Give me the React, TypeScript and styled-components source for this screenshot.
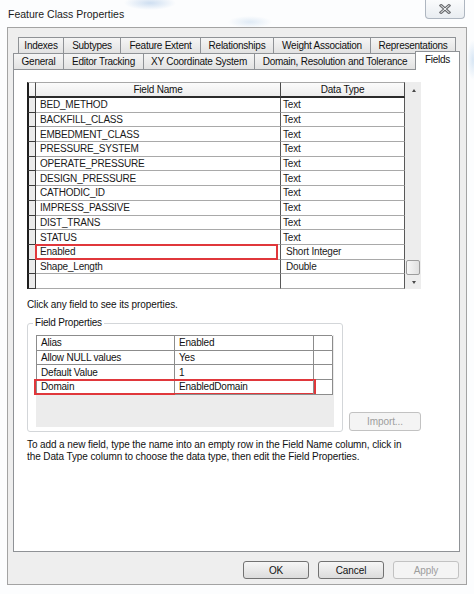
import React from "react";
import styled, { createGlobalStyle } from "styled-components";

type Field = {
  name: string;
  type: string;
  edited?: boolean;
  marked?: boolean;
};

const FIELDS: Field[] = [
  { name: "BED_METHOD", type: "Text" },
  { name: "BACKFILL_CLASS", type: "Text" },
  { name: "EMBEDMENT_CLASS", type: "Text" },
  { name: "PRESSURE_SYSTEM", type: "Text" },
  { name: "OPERATE_PRESSURE", type: "Text" },
  { name: "DESIGN_PRESSURE", type: "Text" },
  { name: "CATHODIC_ID", type: "Text" },
  { name: "IMPRESS_PASSIVE", type: "Text" },
  { name: "DIST_TRANS", type: "Text" },
  { name: "STATUS", type: "Text" },
  { name: "Enabled", type: "Short Integer", edited: true, marked: true },
  { name: "Shape_Length", type: "Double", edited: true },
  { name: "", type: "" },
];

const PROPERTIES = [
  { label: "Alias", value: "Enabled" },
  { label: "Allow NULL values", value: "Yes" },
  { label: "Default Value", value: "1" },
  { label: "Domain", value: "EnabledDomain", marked: true },
];

const BACK_TABS = [
  { label: "Indexes", width: 46 },
  { label: "Subtypes", width: 58 },
  { label: "Feature Extent", width: 81 },
  { label: "Relationships", width: 74 },
  { label: "Weight Association", width: 98 },
  { label: "Representations", width: 86 },
];

const FRONT_TABS = [
  { label: "General", width: 51 },
  { label: "Editor Tracking", width: 81 },
  { label: "XY Coordinate System", width: 112 },
  { label: "Domain, Resolution and Tolerance", width: 162 },
  { label: "Fields", width: 45, active: true },
];

const GlobalStyle = createGlobalStyle`
  html, body {
    margin: 0;
    padding: 0;
  }
  body {
    width: 474px;
    height: 594px;
    overflow: hidden;
    background:
      radial-gradient(ellipse 26px 7px at 150px 3px, rgba(150, 185, 225, 0.45), transparent),
      radial-gradient(ellipse 22px 6px at 250px 22px, rgba(170, 200, 230, 0.35), transparent),
      radial-gradient(ellipse 6px 20px at 473px 60px, rgba(160, 195, 230, 0.4), transparent),
      #fcfdfe;
    font-family: "Liberation Sans", Arial, sans-serif;
    font-size: 10px;
    color: #111;
  }
`;

const Screen = styled.div`
  width: 474px;
  height: 594px;
`;

const TitleBar = styled.div`
  height: 27px;
  display: flex;
  justify-content: space-between;
  align-items: flex-start;
  padding: 0 9px 0 8px;
  box-sizing: border-box;
`;

const Title = styled.div`
  margin-top: 8px;
  font-size: 10.5px;
  color: #1b1b1b;
`;

const CloseButton = styled.div`
  width: 40px;
  height: 20px;
  margin-top: -1px;
  box-sizing: border-box;
  border: 1px solid #aeb6c0;
  border-top: none;
  border-radius: 0 0 4px 4px;
  background: linear-gradient(#fbfcfd, #e9edf1);
  display: flex;
  align-items: center;
  justify-content: center;
`;

const Client = styled.div`
  margin: 0 7px;
  height: 558px;
  box-sizing: border-box;
  border: 1px solid #a3a3a3;
  background: #eeeeee;
  padding: 9px 6px 0 5px;
`;

const TabControl = styled.div`
  display: flex;
  flex-direction: column;
`;

const TabRow = styled.div<{ $indent: number }>`
  display: flex;
  align-items: flex-end;
  height: 16px;
  padding-left: ${(p) => p.$indent}px;
`;

const Tab = styled.div<{ $w: number; $active?: boolean }>`
  width: ${(p) => p.$w}px;
  height: ${(p) => (p.$active ? 19 : 16)}px;
  margin-right: -1px;
  margin-bottom: ${(p) => (p.$active ? -1 : 0)}px;
  box-sizing: border-box;
  border: 1px solid #8f9296;
  border-bottom: none;
  background: ${(p) =>
    p.$active ? "#ffffff" : "linear-gradient(#f5f5f5, #e2e2e2)"};
  position: relative;
  z-index: ${(p) => (p.$active ? 2 : 1)};
  display: flex;
  align-items: ${(p) => (p.$active ? "flex-start" : "center")};
  padding-top: ${(p) => (p.$active ? 2 : 0)}px;
  justify-content: center;
  white-space: nowrap;
  letter-spacing: -0.25px;
  color: #111;
`;

const Panel = styled.div`
  height: 483px;
  box-sizing: border-box;
  border: 1px solid #8f9296;
  background: #ffffff;
  padding: 12px 0 0 13px;
`;

const FieldGrid = styled.div`
  display: flex;
  width: 394px;
  height: 207px;
`;

const GridTable = styled.div`
  display: grid;
  grid-template-columns: 9px 245px 124px;
  grid-template-rows: 16px repeat(13, 14.7px);
`;

const HeaderCell = styled.div<{ $selector?: boolean }>`
  box-sizing: border-box;
  border-top: 1px solid #a8a8a8;
  border-right: 1px solid #4a4a4a;
  border-bottom: 2px solid #2b2b2b;
  border-left: ${(p) => (p.$selector ? "2px solid #1d1d1d" : "none")};
  background: linear-gradient(#fbfbfb, #ededed);
  display: flex;
  align-items: center;
  justify-content: center;
  letter-spacing: -0.2px;
`;

const SelectorCell = styled.div`
  box-sizing: border-box;
  border-left: 2px solid #1d1d1d;
  border-right: 1px solid #3d3d3d;
  border-bottom: 1px solid #3d3d3d;
  background: #ebebeb;
`;

const Cell = styled.div<{ $pad: number }>`
  position: relative;
  box-sizing: border-box;
  border-right: 1px solid #585858;
  border-bottom: 1px solid #a9a9a9;
  padding-left: ${(p) => p.$pad}px;
  display: flex;
  align-items: center;
  white-space: nowrap;
  letter-spacing: -0.2px;
  color: #1a1a1a;
`;

const Marker = styled.div<{ $spanWidth?: number }>`
  position: absolute;
  top: -1px;
  bottom: -1px;
  left: ${(p) => (p.$spanWidth ? -3 : -1)}px;
  ${(p) => (p.$spanWidth ? `width: ${p.$spanWidth}px;` : "right: 2px;")}
  border: 2px solid #e0373b;
  box-sizing: border-box;
  pointer-events: none;
`;

const ScrollBar = styled.div`
  width: 16px;
  display: flex;
  flex-direction: column;
  background: #ededed;
  padding-left: 1px;
  box-sizing: border-box;
`;

const ScrollArrow = styled.div<{ $down?: boolean; $h: number }>`
  height: ${(p) => p.$h}px;
  display: flex;
  align-items: center;
  justify-content: center;

  &::after {
    content: "";
    width: 0;
    height: 0;
    border-left: 2.5px solid transparent;
    border-right: 2.5px solid transparent;
    ${(p) =>
      p.$down
        ? "border-top: 3px solid #4a4a4a;"
        : "border-bottom: 3px solid #4a4a4a;"}
  }
`;

const ScrollTrack = styled.div`
  flex: 1;
  display: flex;
  align-items: flex-end;
`;

const ScrollThumb = styled.div`
  width: 14px;
  height: 15px;
  box-sizing: border-box;
  border: 1px solid #9c9c9c;
  border-radius: 2px;
  background: linear-gradient(90deg, #f7f7f7, #e0e0e0);
`;

const Hint = styled.div`
  margin-top: 10px;
  line-height: 12px;
  letter-spacing: -0.1px;
`;

const PropertiesRow = styled.div`
  display: flex;
  align-items: flex-end;
  gap: 6px;
  margin-top: 6px;
`;

const GroupBox = styled.fieldset`
  margin: 0;
  width: 316px;
  box-sizing: border-box;
  border: 1px solid #d3d6d9;
  border-radius: 3px;
  padding: 0 8px 4px 8px;
  min-width: 0;
`;

const GroupLabel = styled.legend`
  margin-left: -3px;
  padding: 0 2px;
  line-height: 12px;
  letter-spacing: -0.2px;
`;

const PropertiesArea = styled.div`
  margin-top: 6px;
  width: 298px;
  height: 92px;
  background: #ececec;
`;

const PropertiesTable = styled.div`
  display: grid;
  grid-template-columns: 138px 139px 19px;
  grid-template-rows: repeat(4, 14.7px);
  border-top: 1px solid #8c8c8c;
  border-left: 1px solid #8c8c8c;
  width: 296px;
  box-sizing: border-box;
  background: #ffffff;
`;

const PropCell = styled.div`
  position: relative;
  box-sizing: border-box;
  border-right: 1px solid #8c8c8c;
  border-bottom: 1px solid #8c8c8c;
  padding-left: 4px;
  display: flex;
  align-items: center;
  white-space: nowrap;
  letter-spacing: -0.2px;
`;

const DialogButton = styled.div<{ $disabled?: boolean; $w: number; $h: number }>`
  width: ${(p) => p.$w}px;
  height: ${(p) => p.$h}px;
  box-sizing: border-box;
  border: 1px solid ${(p) => (p.$disabled ? "#c2c2c2" : "#727272")};
  border-radius: 3px;
  background: ${(p) =>
    p.$disabled ? "#f4f4f4" : "linear-gradient(#f6f6f6, #dcdcdc)"};
  color: ${(p) => (p.$disabled ? "#9d9d9d" : "#111")};
  display: flex;
  align-items: center;
  justify-content: center;
  letter-spacing: -0.1px;
`;

const ImportWrap = styled.div`
  margin-bottom: 1px;
`;

const HelpText = styled.div`
  margin-top: 7px;
  line-height: 12px;
  letter-spacing: -0.1px;
`;

const ButtonBar = styled.div`
  display: flex;
  justify-content: flex-end;
  gap: 9px;
  margin-top: 9px;
  padding-right: 1px;
`;

const CloseGlyph = () => (
  <svg width="12" height="10" viewBox="0 0 12 10">
    <path d="M2 1.5 L10 8.5 M10 1.5 L2 8.5" stroke="#6d6f72" strokeWidth="3" strokeLinecap="square" />
    <path d="M2 1.5 L10 8.5 M10 1.5 L2 8.5" stroke="#f4f6f8" strokeWidth="1" strokeLinecap="square" />
  </svg>
);

export default function App() {
  return (
    <Screen>
      <GlobalStyle />
      <TitleBar>
        <Title>Feature Class Properties</Title>
        <CloseButton>
          <CloseGlyph />
        </CloseButton>
      </TitleBar>
      <Client>
        <TabControl>
          <TabRow $indent={5}>
            {BACK_TABS.map((t) => (
              <Tab key={t.label} $w={t.width}>
                {t.label}
              </Tab>
            ))}
          </TabRow>
          <TabRow $indent={0}>
            {FRONT_TABS.map((t) => (
              <Tab key={t.label} $w={t.width} $active={t.active}>
                {t.label}
              </Tab>
            ))}
          </TabRow>
          <Panel>
            <FieldGrid>
              <GridTable>
                <HeaderCell $selector />
                <HeaderCell>Field Name</HeaderCell>
                <HeaderCell>Data Type</HeaderCell>
                {FIELDS.map((f, i) => (
                  <React.Fragment key={i}>
                    <SelectorCell />
                    <Cell $pad={4}>
                      {f.name}
                      {f.marked && <Marker />}
                    </Cell>
                    <Cell $pad={f.edited ? 5 : 2}>{f.type}</Cell>
                  </React.Fragment>
                ))}
              </GridTable>
              <ScrollBar>
                <ScrollArrow $h={16} />
                <ScrollTrack>
                  <ScrollThumb />
                </ScrollTrack>
                <ScrollArrow $h={14} $down />
              </ScrollBar>
            </FieldGrid>
            <Hint>Click any field to see its properties.</Hint>
            <PropertiesRow>
              <GroupBox>
                <GroupLabel>Field Properties</GroupLabel>
                <PropertiesArea>
                  <PropertiesTable>
                    {PROPERTIES.map((p) => (
                      <React.Fragment key={p.label}>
                        <PropCell>
                          {p.label}
                          {p.marked && <Marker $spanWidth={282} />}
                        </PropCell>
                        <PropCell>{p.value}</PropCell>
                        <PropCell />
                      </React.Fragment>
                    ))}
                  </PropertiesTable>
                </PropertiesArea>
              </GroupBox>
              <ImportWrap>
                <DialogButton $disabled $w={72} $h={19}>
                  Import...
                </DialogButton>
              </ImportWrap>
            </PropertiesRow>
            <HelpText>
              To add a new field, type the name into an empty row in the Field Name column, click in
              <br />
              the Data Type column to choose the data type, then edit the Field Properties.
            </HelpText>
          </Panel>
        </TabControl>
        <ButtonBar>
          <DialogButton $w={66} $h={18}>OK</DialogButton>
          <DialogButton $w={66} $h={18}>Cancel</DialogButton>
          <DialogButton $w={66} $h={18} $disabled>
            Apply
          </DialogButton>
        </ButtonBar>
      </Client>
    </Screen>
  );
}
